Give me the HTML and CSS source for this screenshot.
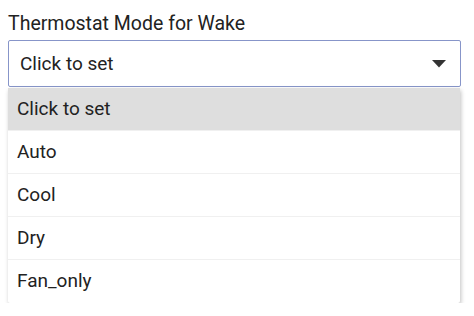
FILE: index.html
```html
<!DOCTYPE html>
<html>
<head>
<meta charset="utf-8">
<link rel="stylesheet" href="styles.css">
</head>
<body>
<div class="field">
  <div class="label">Thermostat Mode for Wake</div>
  <div class="select">
    <span class="value">Click to set</span>
    <svg class="arrow" width="14" height="8" viewBox="0 0 14 8"><path d="M0 0 L14 0 L7 7.5 Z" fill="#333"/></svg>
  </div>
  <ul class="menu">
    <li class="item active">Click to set</li>
    <li class="item">Auto</li>
    <li class="item">Cool</li>
    <li class="item">Dry</li>
    <li class="item">Fan_only</li>
  </ul>
</div>
</body>
</html>
```
FILE: styles.css
```css
html, body {
  margin: 0;
  padding: 0;
  background: #fff;
}
body {
  font-family: Roboto, "Liberation Sans", sans-serif;
  color: #222;
}
.field {
  padding: 12px 13px 0 8px;
}
.label {
  font-size: 19.5px;
  line-height: 24px;
  height: 28px;
}
.select {
  display: flex;
  align-items: center;
  justify-content: space-between;
  height: 45px;
  border: 1px solid #8795c9;
  border-radius: 2px;
  padding: 0 14px 0 11px;
  font-size: 19px;
}
.arrow {
  display: block;
}
.menu {
  list-style: none;
  margin: 1px 1px 0 0;
  padding: 0;
  background: #fff;
  box-shadow: 1px 2px 4px rgba(0,0,0,0.25);
  border-radius: 2px;
}
.item {
  height: 42px;
  line-height: 42px;
  padding-left: 9px;
  font-size: 19px;
  border-bottom: 1px solid #f0f0f0;
}
.item:last-child {
  border-bottom: none;
  height: 43px;
}
.item.active {
  background: #dedede;
}
```
